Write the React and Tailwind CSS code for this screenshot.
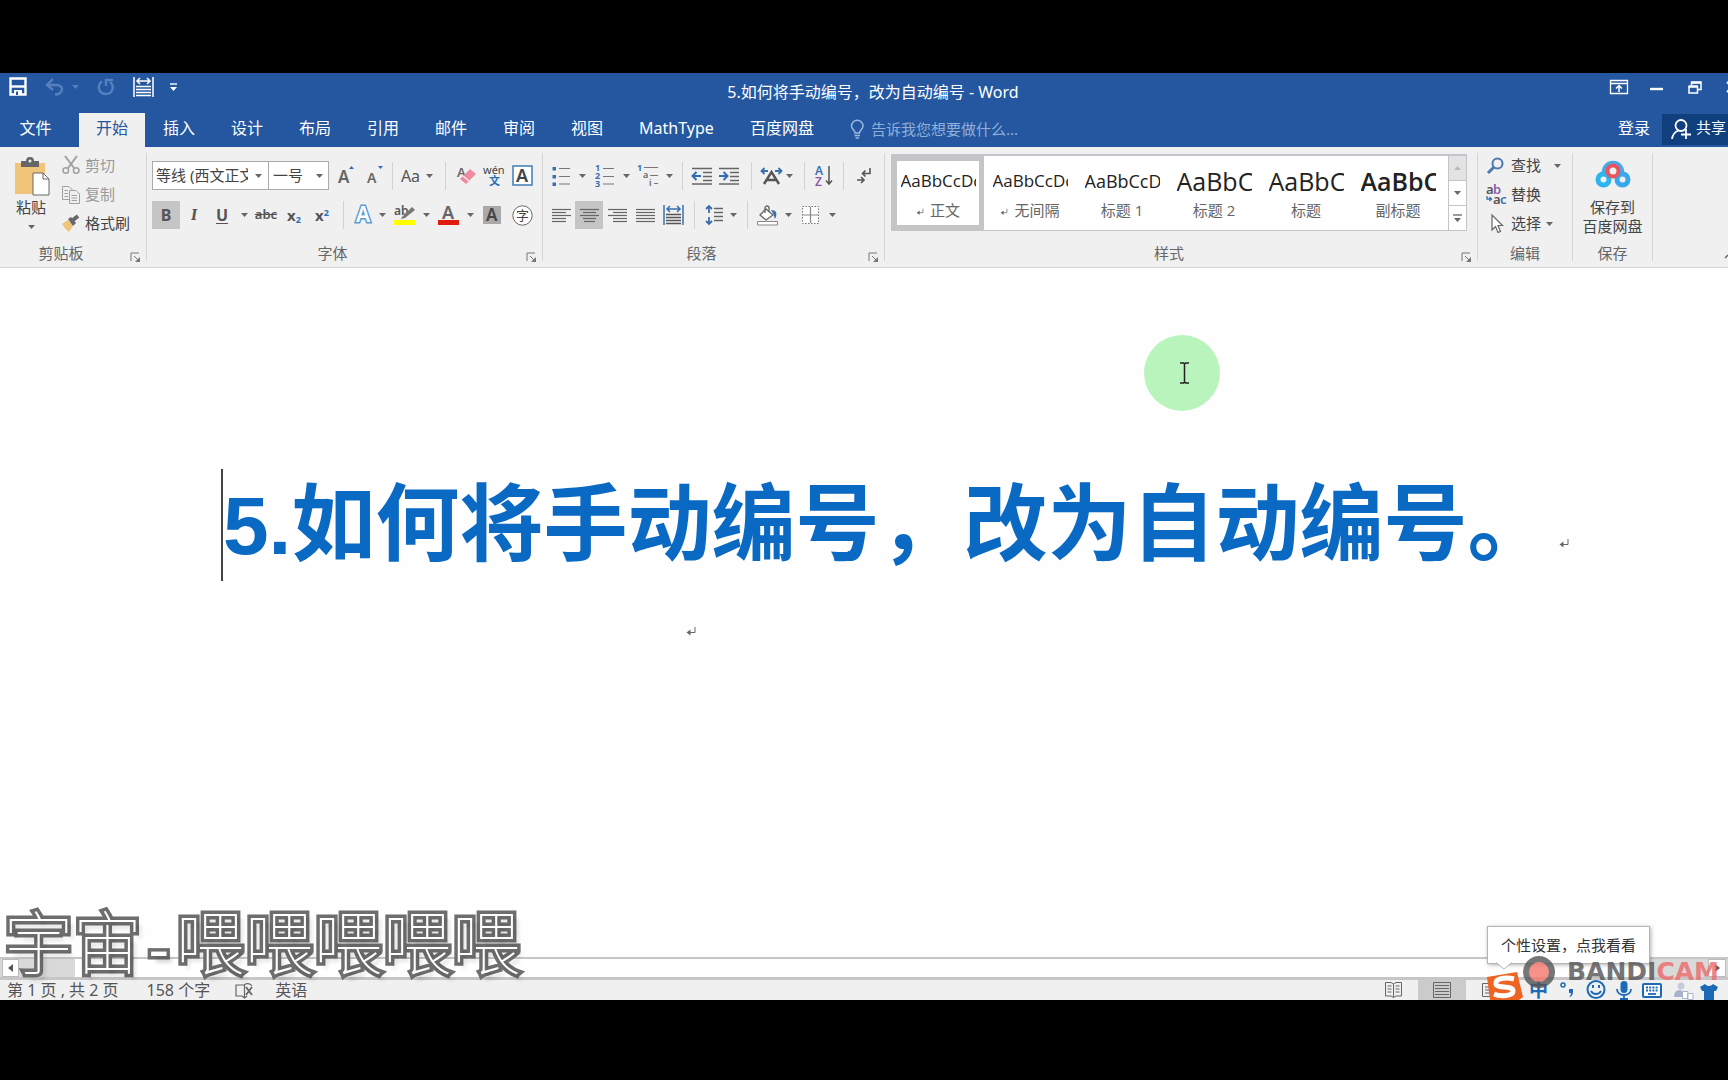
import React from 'react';
import clsx from 'clsx';

const TABS = ['插入', '设计', '布局', '引用', '邮件', '审阅', '视图', 'MathType', '百度网盘'];

const STYLES = [
    { name: '正文', sample: 'AaBbCcDd', mark: true, active: true, look: 'text-[17px]' },
    { name: '无间隔', sample: 'AaBbCcDd', mark: true, look: 'text-[17px]' },
    { name: '标题 1', sample: 'AaBbCcDd', look: 'text-[18px]' },
    { name: '标题 2', sample: 'AaBbCc', look: 'text-[25px]' },
    { name: '标题', sample: 'AaBbCc', look: 'text-[25px]' },
    { name: '副标题', sample: 'AaBbCc', look: 'text-[25px] font-semibold' },
];

const Icon = ({ w = 20, h = 20, className, children }) => (
    <svg width={w} height={h} viewBox={`0 0 ${w} ${h}`} fill="none" className={clsx('shrink-0 overflow-visible', className)} aria-hidden="true">
        {children}
    </svg>
);

const Caret = ({ className = 'text-[#666]' }) => (
    <Icon w={7} h={4} className={className}>
        <path d="M0 0H7L3.5 4Z" fill="currentColor" />
    </Icon>
);

const Tool = ({ label, className = 'w-7', active, children }) => (
    <button
        type="button"
        aria-label={label}
        className={clsx('flex h-7 shrink-0 items-center justify-center', active ? 'bg-[#c5c5c5]' : 'hover:bg-[#d5d5d5]', className)}
    >
        {children}
    </button>
);

const Drop = ({ label, className = 'w-3' }) => (
    <Tool label={label} className={className}>
        <Caret />
    </Tool>
);

const Sep = ({ className }) => (
    <div className={clsx('flex shrink-0 justify-center', className)}>
        <div className="h-7 w-px bg-[#d2d2d2]" />
    </div>
);

const Launcher = () => (
    <button type="button" aria-label="更多选项" className="absolute right-[5px] bottom-0">
        <Icon w={11} h={11}>
            <path d="M1 9V1H9" stroke="#777" />
            <path d="M4 4L8 8" stroke="#777" />
            <path d="M10 5V10H5Z" fill="#777" />
        </Icon>
    </button>
);

const Group = ({ title, launcher, className, children }) => (
    <section className={clsx('flex shrink-0 flex-col', className)} aria-label={title}>
        <div className="flex-1">{children}</div>
        <div className={clsx('relative mb-1 h-5 text-center leading-5 text-[#666]', launcher && 'pr-6')}>
            {title}
            {launcher && <Launcher />}
        </div>
    </section>
);

const Divider = () => <div className="my-[6px] w-px shrink-0 bg-[#d5d5d5]" />;

const Lines = ({ rows }) => (
    <Icon w={19} h={15}>
        {rows.map(([x1, x2], i) => (
            <path key={i} d={`M${x1} ${1.5 + i * 3}H${x2}`} stroke="#666" strokeWidth="1.2" />
        ))}
    </Icon>
);

const DistributeIcon = ({ color, arrow }) => (
    <Icon w={21} h={20}>
        <path d="M1 0V20M20 0V20" stroke={arrow} strokeWidth="1.5" />
        <path d="M4 4H17M7 1L4 4L7 7M14 1L17 4L14 7" stroke={arrow} strokeWidth="1.5" />
        <path d="M3 9.5H18M3 12.5H18M3 15.5H18M3 18.5H18" stroke={color} strokeWidth="1.5" />
    </Icon>
);

const IndentIcon = ({ right }) => (
    <Icon w={22} h={18}>
        <path d="M1 1.5H21M12 5.5H21M12 9.5H21M12 13.5H21M1 17H21" stroke="#666" strokeWidth="1.3" />
        {right ? (
            <path d="M1 9H9M5.5 5L9.5 9L5.5 13" stroke="#2e6db5" strokeWidth="2" />
        ) : (
            <path d="M2 9H10M5.5 5L1.5 9L5.5 13" stroke="#2e6db5" strokeWidth="2" />
        )}
    </Icon>
);

const ReturnMark = ({ className }) => (
    <Icon w={10} h={11} className={className}>
        <path d="M9 1V6.5H2" stroke="currentColor" />
        <path d="M0.5 6.5L4.500 3.500V9.5Z" fill="currentColor" />
    </Icon>
);

const TitleBar = () => (
    <header className="shrink-0 bg-[#2457a0] text-white">
        <div className="relative flex h-10 justify-between">
            <div className="flex h-[27px] items-center pl-[9px]">
                <button type="button" aria-label="保存">
                    <Icon w={18} h={19}>
                        <path d="M1.5 1.5H16.5V17.5H1.5Z" stroke="white" strokeWidth="2.4" />
                        <path d="M2 9.5H16" stroke="white" strokeWidth="2.4" />
                        <path d="M5 17V13H13V17Z" fill="white" />
                        <path d="M7 14.5H9V18H7Z" fill="#2457a0" />
                    </Icon>
                </button>
                <button type="button" aria-label="撤消" className="ml-[18px] flex items-center gap-2 text-[#5580bd]">
                    <Icon w={19} h={18}>
                        <path d="M8 1L2 7L8 12M2.5 7H11C16 7 18 10 16.500 13C15.500 15.500 13 16.500 10 16.500" stroke="currentColor" strokeWidth="2.4" />
                    </Icon>
                    <Caret className="text-[#5580bd]" />
                </button>
                <button type="button" aria-label="重复" className="ml-[18px] text-[#5580bd]">
                    <Icon w={18} h={18}>
                        <path d="M5 3.500C0 7 1 15.500 8.500 16C16 16 18 8 13 4" stroke="currentColor" strokeWidth="2.4" />
                        <path d="M9 8V2H16" stroke="currentColor" strokeWidth="2.4" />
                    </Icon>
                </button>
                <button type="button" aria-label="分散对齐" className="ml-[18px]">
                    <DistributeIcon color="white" arrow="white" />
                </button>
                <button type="button" aria-label="自定义快速访问工具栏" className="ml-4">
                    <Icon w={7} h={8}>
                        <path d="M0 1H7" stroke="white" strokeWidth="1.4" />
                        <path d="M0 4H7L3.5 8Z" fill="white" />
                    </Icon>
                </button>
            </div>
            <h1 className="pointer-events-none absolute inset-x-0 top-[7px] ml-[18px] text-center text-[16px] leading-6">
                5.如何将手动编号，改为自动编号 - Word
            </h1>
            <div className="relative -mr-[10px] flex h-7 items-center">
                <button type="button" aria-label="功能区显示选项">
                    <Icon w={18} h={14}>
                        <path d="M0.500 0.500H17.500V13.500H0.500ZM0.500 3.500H17.500" stroke="white" strokeWidth="1.3" />
                        <path d="M9 12V6M6 8.500L9 5.500L12 8.500" stroke="white" strokeWidth="1.5" />
                    </Icon>
                </button>
                <button type="button" aria-label="最小化" className="ml-[22px]">
                    <Icon w={13} h={14}>
                        <path d="M0 9H13" stroke="white" strokeWidth="2.4" />
                    </Icon>
                </button>
                <button type="button" aria-label="还原" className="ml-[25px]">
                    <Icon w={14} h={13}>
                        <path d="M3.500 4V1.500H13V8.500H10" stroke="white" strokeWidth="1.5" />
                        <path d="M3 1.500H13.500M0.500 5.500H10" stroke="white" strokeWidth="2.4" />
                        <path d="M1 5V12H9.500V5" stroke="white" strokeWidth="1.5" />
                    </Icon>
                </button>
                <button type="button" aria-label="关闭" className="ml-6">
                    <Icon w={12} h={12}>
                        <path d="M1 1L11 11M11 1L1 11" stroke="white" strokeWidth="2" />
                    </Icon>
                </button>
            </div>
        </div>

        <nav className="flex h-[34px] items-stretch text-[16px]">
            <button type="button" className="w-[71px] shrink-0 pb-1">文件</button>
            <button type="button" className="ml-2 w-[66px] shrink-0 bg-[#f0f0f0] pb-1 text-[#2457a0]">开始</button>
            {TABS.map((tab) => (
                <button key={tab} type="button" className="shrink-0 px-[18px] pb-1">
                    {tab}
                </button>
            ))}
            <label className="ml-[18px] flex flex-1 items-center gap-[6px] pb-[2px] text-[#9db9df]">
                <Icon w={15} h={19}>
                    <path d="M5 13C5 10 1.500 9.500 1.500 6A5.700 5.700 0 0 1 13 6C13 9.500 9.500 10 9.500 13Z" stroke="currentColor" strokeWidth="1.5" />
                    <path d="M4.500 15.500H10M5.500 18H9" stroke="currentColor" strokeWidth="1.5" />
                </Icon>
                <input
                    type="text"
                    aria-label="告诉我您想要做什么"
                    placeholder="告诉我您想要做什么..."
                    className="w-full bg-transparent text-[15px] outline-none placeholder:text-[#8fafd9]"
                />
            </label>
            <button type="button" className="w-14 shrink-0 pb-1">登录</button>
            <button type="button" className="mt-px mb-[2px] flex w-[66px] shrink-0 items-center gap-[5px] overflow-hidden bg-[#103f7e] pl-[9px] text-left whitespace-nowrap">
                <Icon w={20} h={21}>
                    <circle cx="10" cy="6.500" r="5.500" stroke="white" strokeWidth="1.8" />
                    <path d="M1 20C1.500 15 4 13 7.500 11.500M15 10V20M10 15.500H20" stroke="white" strokeWidth="1.800" />
                </Icon>
                <span className="pb-[5px] text-[15px]">共享</span>
            </button>
        </nav>
    </header>
);

const ClipboardGroup = () => (
    <Group title="剪贴板" launcher className="w-[146px]">
        <div className="flex pt-1">
            <button type="button" className="ml-[10px] flex w-[42px] flex-col items-center pt-[6px] text-[#444]">
                <Icon w={38} h={40}>
                    <path d="M3 6H33V37H3Z" fill="#f0c479" />
                    <path d="M9 4H14A4 4 0 0 1 22 4H27V10H9Z" fill="#666" />
                    <circle cx="18" cy="4" r="1.500" fill="#eee" />
                    <path d="M21 16H31L37 22V38H21Z" fill="white" stroke="#666" />
                    <path d="M31 16V22H37" stroke="#666" />
                </Icon>
                <span className="leading-5">粘贴</span>
                <span className="mt-2">
                    <Caret />
                </span>
            </button>
            <div className="ml-[10px] flex flex-col text-[#444]">
                <button type="button" className="flex h-[29px] items-center gap-[5px] text-[#9a9a9a]">
                    <Icon w={18} h={19}>
                        <path d="M3 0L12 12M15 0L6 12" stroke="#a0a0a0" strokeWidth="2" />
                        <circle cx="3.800" cy="14.500" r="2.800" stroke="#a0a0a0" strokeWidth="1.500" />
                        <circle cx="14.200" cy="14.500" r="2.800" stroke="#a0a0a0" strokeWidth="1.500" />
                    </Icon>
                    剪切
                </button>
                <button type="button" className="flex h-[29px] items-center gap-[5px] text-[#9a9a9a]">
                    <Icon w={18} h={18}>
                        <path d="M0.500 0.500H7L10 3.500V13.500H0.500Z" stroke="#a0a0a0" />
                        <path d="M7.500 4.500H14L17.500 8V17.500H7.500Z" fill="#f0f0f0" stroke="#a0a0a0" />
                        <path d="M2.500 4.500H6M2.500 7.500H6M2.500 10.500H6M9.500 9.500H15M9.500 12H15M9.500 14.500H15" stroke="#a0a0a0" />
                    </Icon>
                    复制
                </button>
                <button type="button" className="flex h-[29px] items-center gap-[5px]">
                    <Icon w={18} h={17}>
                        <path d="M0 9L6 5L11 11L7 17C4 15 2 12 0 9Z" fill="#f0c479" />
                        <path d="M6 4L9 2L14 8L11 11Z" fill="#666" />
                        <path d="M11 5L16 1" stroke="#666" strokeWidth="4" />
                    </Icon>
                    格式刷
                </button>
            </div>
        </div>
    </Group>
);

const FontGroup = () => (
    <Group title="字体" launcher className="w-[395px]">
        <div className="px-[5px] pt-[14px] text-[#555]">
            <div className="flex h-[29px] items-center">
                <div className="relative">
                    <select aria-label="字体" className="h-[29px] w-[117px] appearance-none border border-[#ababab] bg-white pr-5 pl-[3px] text-[#444] outline-none">
                        <option>等线 (西文正文)</option>
                    </select>
                    <span className="pointer-events-none absolute top-[13px] right-[7px]">
                        <Caret />
                    </span>
                </div>
                <div className="relative">
                    <select aria-label="字号" className="h-[29px] w-[60px] appearance-none border border-l-0 border-[#ababab] bg-white pl-[4px] text-[#444] outline-none">
                        <option>一号</option>
                    </select>
                    <span className="pointer-events-none absolute top-[13px] right-[6px]">
                        <Caret />
                    </span>
                </div>
                <Tool label="增大字号" className="w-[34px]">
                    <Icon w={17} h={20}>
                        <text x="0" y="17" fontSize="17" fontWeight="600" fill="#666">A</text>
                        <path d="M11 3L13.500 0L16 3Z" fill="#2e6db5" />
                    </Icon>
                </Tool>
                <Tool label="减小字号" className="w-6">
                    <Icon w={16} h={20}>
                        <text x="0" y="17" fontSize="14" fontWeight="600" fill="#666">A</text>
                        <path d="M11 0H16L13.500 3Z" fill="#2e6db5" />
                    </Icon>
                </Tool>
                <Sep className="w-[10px]" />
                <Tool label="更改大小写" className="w-10 gap-[6px] text-[16px]">
                    Aa
                    <Caret />
                </Tool>
                <Sep className="w-[16px]" />
                <Tool label="清除所有格式" className="w-[27px]">
                    <Icon w={20} h={20}>
                        <text x="0" y="11" fontSize="13" fontWeight="600" fill="#666">A</text>
                        <path d="M3 13L13 3L19 8L9 18Z" fill="#ee8b9d" />
                        <path d="M6 10L12 15" stroke="#f0f0f0" strokeWidth="1.300" />
                    </Icon>
                </Tool>
                <Tool label="拼音指南">
                    <Icon w={22} h={22}>
                        <text x="0" y="9" fontSize="11" fill="#444">wén</text>
                        <text x="6" y="20" fontSize="11" fontWeight="700" fill="#2e6db5">文</text>
                    </Icon>
                </Tool>
                <Tool label="字符边框">
                    <Icon w={21} h={21}>
                        <path d="M1 1H20V20H1Z" fill="white" stroke="#3f7cb9" strokeWidth="1.500" />
                        <text x="4" y="17" fontSize="18" fontWeight="600" fill="#444">A</text>
                    </Icon>
                </Tool>
            </div>
            <div className="mt-[11px] flex h-7 items-center">
                <Tool label="加粗" active className="w-7 text-[16px] font-bold">B</Tool>
                <Tool label="倾斜" className="w-7 font-serif text-[17px] font-bold italic">I</Tool>
                <Tool label="下划线" className="w-7 text-[16px] font-bold underline underline-offset-2">U</Tool>
                <Drop label="下划线样式" className="w-4" />
                <Tool label="删除线" className="w-7 text-[13px] font-semibold line-through">abc</Tool>
                <Tool label="下标" className="w-7 text-[15px] font-bold">
                    <span>
                        x<sub className="text-[9px] text-[#2e6db5]">2</sub>
                    </span>
                </Tool>
                <Tool label="上标" className="w-7 text-[15px] font-bold">
                    <span>
                        x<sup className="text-[9px] text-[#2e6db5]">2</sup>
                    </span>
                </Tool>
                <Sep className="w-[14px]" />
                <Tool label="文本效果和版式" className="w-[26px]">
                    <Icon w={16} h={20}>
                        <text x="1" y="17" fontSize="21" fontWeight="600" fill="white" stroke="#5b9bd5" strokeWidth="3" paintOrder="stroke">A</text>
                    </Icon>
                </Tool>
                <Drop label="文本效果选项" />
                <Tool label="以不同颜色突出显示文本" className="w-8">
                    <Icon w={21} h={21}>
                        <text x="0" y="10" fontSize="12" fontWeight="600" fill="#555">ab</text>
                        <path d="M8 12L18 2L21 5L11 13L7 14Z" fill="#777" />
                        <path d="M0 15H21V20H0Z" fill="#ffff00" />
                    </Icon>
                </Tool>
                <Drop label="突出显示颜色" />
                <Tool label="字体颜色" className="w-8">
                    <Icon w={21} h={21}>
                        <text x="4" y="14" fontSize="18" fontWeight="600" fill="#666">A</text>
                        <path d="M0 15H21V20H0Z" fill="#e21a0e" />
                    </Icon>
                </Tool>
                <Drop label="选择字体颜色" />
                <Tool label="字符底纹" className="w-8">
                    <Icon w={18} h={18}>
                        <path d="M0 0H18V18H0Z" fill="#a9a9a9" />
                        <text x="3" y="15" fontSize="17" fontWeight="600" fill="#444">A</text>
                    </Icon>
                </Tool>
                <Tool label="带圈字符">
                    <Icon w={21} h={21}>
                        <circle cx="10.500" cy="10.500" r="9.700" fill="white" stroke="#666" />
                        <text x="4" y="15" fontSize="13" fill="#444">字</text>
                    </Icon>
                </Tool>
            </div>
        </div>
    </Group>
);

const ParagraphGroup = () => (
    <Group title="段落" launcher className="w-[341px]">
        <div className="px-[4px] pt-[14px] text-[#555]">
            <div className="flex h-[29px] items-center">
                <Tool label="项目符号">
                    <Icon w={18} h={20}>
                        <path d="M7 2.500H18M7 10.500H18M7 18H18" stroke="#777" strokeWidth="1.200" />
                        <path d="M0.500 1H4V4.500H0.500ZM0.500 9H4V12.500H0.500ZM0.500 16.500H4V20H0.500Z" fill="#3a6fae" />
                    </Icon>
                </Tool>
                <Drop label="项目符号库" className="w-[14px]" />
                <Tool label="编号" className="w-[30px]">
                    <Icon w={19} h={22}>
                        <path d="M8 3.500H19M8 11.500H19M8 19H19" stroke="#777" strokeWidth="1.200" />
                        <g fill="#3a6fae" fontSize="9" fontWeight="700">
                            <text x="0" y="6">1</text>
                            <text x="0" y="14">2</text>
                            <text x="0" y="22">3</text>
                        </g>
                    </Icon>
                </Tool>
                <Drop label="编号库" className="w-[14px]" />
                <Tool label="多级列表" className="w-[30px]">
                    <Icon w={22} h={22}>
                        <path d="M7 2.500H21M13 10.500H21M17 18.500H21" stroke="#777" strokeWidth="1.200" />
                        <text x="0" y="6" fontSize="9" fontWeight="700" fill="#3a6fae">1</text>
                        <text x="6" y="13" fontSize="9" fontWeight="600" fill="#666">a</text>
                        <text x="12" y="21" fontSize="9" fontWeight="600" fill="#666">i</text>
                    </Icon>
                </Tool>
                <Drop label="列表库" />
                <Sep className="w-[14px]" />
                <Tool label="减少缩进量" className="w-[26px]">
                    <IndentIcon />
                </Tool>
                <Tool label="增加缩进量">
                    <IndentIcon right />
                </Tool>
                <Sep className="w-4" />
                <Tool label="中文版式" className="w-6">
                    <Icon w={21} h={19}>
                        <path d="M0 5H7M3.500 2L0.500 5L3.500 8M21 5H14M17.500 2L20.500 5L17.500 8" stroke="#3a6fae" strokeWidth="1.800" />
                        <path d="M3 18L10.500 6L18 18M6 14H15" stroke="#555" strokeWidth="2.400" />
                    </Icon>
                </Tool>
                <Drop label="中文版式选项" />
                <Sep className="w-[18px]" />
                <Tool label="排序" className="w-[22px]">
                    <Icon w={18} h={22}>
                        <text x="0" y="10" fontSize="12" fontWeight="600" fill="#3a6fae">A</text>
                        <text x="0" y="21" fontSize="12" fontWeight="600" fill="#8a5ba6">Z</text>
                        <path d="M14 1V19M11 15.500L14 19L17 15.500" stroke="#555" strokeWidth="1.500" />
                    </Icon>
                </Tool>
                <Sep className="w-4" />
                <Tool label="显示编辑标记" className="w-[26px]">
                    <Icon w={14} h={18}>
                        <path d="M13 1V6.500H6M8.500 3.500L5.500 6.500L8.500 9.500M0 13H6M4 10L7 13L4 16" stroke="#555" strokeWidth="1.600" />
                    </Icon>
                </Tool>
            </div>
            <div className="mt-[11px] flex h-7 items-center">
                <Tool label="左对齐">
                    <Lines rows={[[0, 19], [0, 14], [0, 19], [0, 14], [0, 14]]} />
                </Tool>
                <Tool label="居中" active>
                    <Lines rows={[[0, 19], [3, 16], [0, 19], [3, 16], [4, 15]]} />
                </Tool>
                <Tool label="右对齐">
                    <Lines rows={[[0, 19], [5, 19], [0, 19], [5, 19], [5, 19]]} />
                </Tool>
                <Tool label="两端对齐">
                    <Lines rows={[[0, 19], [0, 19], [0, 19], [0, 19], [0, 19]]} />
                </Tool>
                <Tool label="分散对齐">
                    <DistributeIcon color="#555" arrow="#3a6fae" />
                </Tool>
                <Sep className="w-[14px]" />
                <Tool label="行和段落间距" className="w-[26px]">
                    <Icon w={18} h={20}>
                        <path d="M4 1V8M1 4L4 1L7 4M4 12V19M1 16L4 19L7 16" stroke="#3a6fae" strokeWidth="1.800" />
                        <path d="M9 3.500H18M9 7.500H18M9 11.500H18M9 15.500H18" stroke="#666" strokeWidth="1.300" />
                    </Icon>
                </Tool>
                <Drop label="间距选项" />
                <Sep className="w-4" />
                <Tool label="底纹" className="w-[26px]">
                    <Icon w={22} h={21}>
                        <path d="M9 4L16 10L9 15L3 10Z" fill="white" stroke="#666" strokeWidth="1.300" />
                        <path d="M8 8V3A2 2 0 0 1 12 3V7" stroke="#666" strokeWidth="1.300" />
                        <path d="M14 5C19 5 21 8 18 14C17 11 17 9 14 5Z" fill="#3a6fae" />
                        <path d="M0.500 16.500H20.500V20H0.500Z" fill="white" stroke="#888" />
                    </Icon>
                </Tool>
                <Drop label="底纹颜色" className="w-[14px]" />
                <Tool label="边框" className="w-[30px]">
                    <Icon w={17} h={18}>
                        <path d="M0.500 0.500H16.500V17.500H0.500Z" fill="white" stroke="#777" strokeDasharray="1.500 1.500" />
                        <path d="M8.500 1V17M1 9H16" stroke="#888" strokeWidth="1.200" />
                    </Icon>
                </Tool>
                <Drop label="边框选项" className="w-[14px]" />
            </div>
        </div>
    </Group>
);

const StylesGroup = () => (
    <Group title="样式" launcher className="w-[592px]">
        <div className="mt-[7px] ml-[6px] flex h-[77px] w-[576px] border border-t-2 border-[#c1c4c8] bg-white">
            {STYLES.map(({ name, sample, mark, active, look }) => (
                <button
                    key={name}
                    type="button"
                    className={clsx(
                        'flex w-[92px] shrink-0 flex-col items-center border-[5px] pt-[4px] font-["Open_Sans","Noto_Sans_CJK_SC",sans-serif]',
                        active ? 'border-[#c5c5c5]' : 'border-transparent'
                    )}
                >
                    <span className={clsx('h-8 w-[75px] overflow-hidden text-left leading-8 whitespace-nowrap text-[#222]', look)}>{sample}</span>
                    <span className="flex items-center gap-[6px] leading-[26px] whitespace-nowrap text-[#666]">
                        {mark && <ReturnMark className="mt-1 size-2" />}
                        {name}
                    </span>
                </button>
            ))}
            <div className="ml-auto flex w-[18px] shrink-0 flex-col divide-y divide-[#c5c5c5] border-l border-[#c5c5c5]">
                <button type="button" aria-label="上一行" className="flex flex-1 items-center justify-center bg-[#e3e3e3]">
                    <Caret className="rotate-180 text-[#bbb]" />
                </button>
                <button type="button" aria-label="下一行" className="flex flex-1 items-center justify-center">
                    <Caret />
                </button>
                <button type="button" aria-label="其他样式" className="flex flex-1 items-center justify-center">
                    <Icon w={9} h={8}>
                        <path d="M0 1H9" stroke="#666" strokeWidth="1.300" />
                        <path d="M1 4H8L4.500 8Z" fill="#666" />
                    </Icon>
                </button>
            </div>
        </div>
    </Group>
);

const EditGroup = () => (
    <Group title="编辑" className="w-[94px]">
        <div className="flex flex-col pt-1 pl-2 text-[#444]">
            <button type="button" className="flex h-[29px] items-center">
                <Icon w={20} h={18} className="mr-[5px]">
                    <circle cx="11.500" cy="6.500" r="5" stroke="#4b78ae" strokeWidth="2" />
                    <path d="M8 10L2 16" stroke="#4b78ae" strokeWidth="3" />
                </Icon>
                查找
                <span className="ml-[13px]">
                    <Caret />
                </span>
            </button>
            <button type="button" className="flex h-[29px] items-center">
                <Icon w={22} h={22} className="mr-[3px]">
                    <g fontSize="13" fontWeight="600">
                        <text x="0" y="10" fill="#555">a</text>
                        <text x="7" y="10" fill="#8a5ba6">b</text>
                        <text x="7" y="20" fill="#555">a</text>
                        <text x="14" y="20" fill="#3a6fae">c</text>
                    </g>
                    <path d="M1 12V15H5M3.500 13L5.500 15L3.500 17" stroke="#3a6fae" strokeWidth="1.300" />
                </Icon>
                替换
            </button>
            <button type="button" className="flex h-[29px] items-center">
                <Icon w={20} h={20} className="mr-[5px]">
                    <path d="M6 1V16L9.500 12.500L12 18.500L14.500 17.500L12 11.500H16.500Z" fill="white" stroke="#666" strokeWidth="1.200" />
                </Icon>
                选择
                <span className="ml-[5px]">
                    <Caret />
                </span>
            </button>
        </div>
    </Group>
);

const SaveGroup = () => (
    <Group title="保存" className="w-[79px]">
        <button type="button" className="flex w-full flex-col items-center pt-[13px] leading-[19px] whitespace-nowrap text-[#444]">
            <Icon w={36} h={29} className="mb-[9px]">
                <path d="M9 12A9 9 0 0 1 27 12" stroke="#4aa8e8" strokeWidth="4.500" />
                <circle cx="8.500" cy="19.500" r="5.500" stroke="#2db5ee" strokeWidth="5" />
                <circle cx="27.500" cy="19.500" r="5.500" stroke="#38a7ef" strokeWidth="5" />
                <circle cx="18" cy="11" r="5.500" fill="#f0f0f0" stroke="#e9545f" strokeWidth="4" />
            </Icon>
            <span>保存到</span>
            <span>百度网盘</span>
        </button>
    </Group>
);

const Ribbon = () => (
    <div className="flex h-[121px] shrink-0 overflow-hidden border-b border-[#d5d5d5] bg-[#f0f0f0] text-[15px]">
        <ClipboardGroup />
        <Divider />
        <FontGroup />
        <Divider />
        <ParagraphGroup />
        <Divider />
        <StylesGroup />
        <Divider />
        <EditGroup />
        <Divider />
        <SaveGroup />
        <Divider />
        <button type="button" aria-label="折叠功能区" className="mb-2 ml-auto flex items-end">
            <Icon w={3} h={5}>
                <path d="M0 4L3 1" stroke="#666" strokeWidth="1.500" />
            </Icon>
        </button>
    </div>
);

const Document = () => (
    <main className="relative flex-1 overflow-hidden bg-[#fefefe]">
        <div className="flex flex-col px-[221px] pt-[201px]">
            <div className="flex h-28 items-center border-l-2 border-[#444] whitespace-nowrap">
                <h2 className='font-["Liberation_Sans","Noto_Sans_CJK_SC",sans-serif] text-[84px] leading-[114px] font-bold text-[#0a69c2]'>
                    <span className="text-[82px]">5.</span>如何将手动编号，改为自动编号。
                </h2>
                <ReturnMark className="mt-9 ml-2 text-[#666]" />
            </div>
            <ReturnMark className="mt-[45px] ml-[465px] text-[#666]" />
        </div>
        {/* click highlight with the text cursor inside */}
        <div className="absolute top-[67px] left-[1144px] flex size-[76px] items-center justify-center rounded-full bg-[#b9f4bd] pl-1">
            <Icon w={9} h={22}>
                <path d="M0 1H3.500L4.500 2L5.500 1H9M4.500 2V20M0 21H3.500L4.500 20L5.500 21H9" stroke="#222" strokeWidth="1.500" />
            </Icon>
        </div>
    </main>
);

const InputMethodBar = () => (
    <div className="absolute right-0 bottom-0 flex h-7 w-[242px] items-end overflow-hidden text-[#1d69b8]">
        <Icon w={37} h={28}>
            <path d="M1 5L31 0L37 25L33 28H4Z" fill="#ee6424" />
            <path d="M28 7C20 5 9 6 10 12C11 17 27 13 27 19C27 24 15 25 8 22" stroke="white" strokeWidth="5" />
        </Icon>
        <span className="ml-[6px] text-[19px] leading-5 font-bold">中</span>
        <Icon w={14} h={16} className="mb-[2px] ml-3">
            <circle cx="3" cy="3" r="2" stroke="currentColor" strokeWidth="1.500" />
            <path d="M9 7H13V10C13 13 11 15 9 15.500C10 14 11 13 11 11H9Z" fill="currentColor" />
        </Icon>
        <Icon w={20} h={20} className="ml-3">
            <circle cx="10" cy="9.500" r="8.500" stroke="currentColor" strokeWidth="2" />
            <path d="M7 5V8M13 5V8" stroke="currentColor" strokeWidth="2" />
            <path d="M5 11C7 15 13 15 15 11" stroke="currentColor" strokeWidth="1.800" />
        </Icon>
        <Icon w={16} h={19} className="ml-[10px]">
            <rect x="4.500" y="0" width="7" height="12" rx="3.500" fill="currentColor" />
            <path d="M1 8C1 16 15 16 15 8M8 14V18M4 18H12" stroke="currentColor" strokeWidth="1.800" />
        </Icon>
        <Icon w={20} h={15} className="mb-[2px] ml-[10px]">
            <rect x="1" y="1" width="18" height="13" rx="1" fill="white" stroke="currentColor" strokeWidth="2" />
            <path d="M4 4.500H16M4 7.500H16" stroke="currentColor" strokeWidth="1.800" strokeDasharray="2 1.200" />
            <path d="M6 11H14" stroke="currentColor" strokeWidth="1.800" />
        </Icon>
        <Icon w={20} h={18} className="ml-3">
            <circle cx="7" cy="4" r="3.500" fill="#c9ccd6" />
            <path d="M0 15C0 9 3 8 7 8L11 15Z" fill="#a9b3cc" />
            <path d="M8.500 9.500H14V16.500H8.500ZM13.500 11.500H19V17.500H13.500Z" fill="white" stroke="#a9b3cc" />
        </Icon>
        <Icon w={18} h={17} className="ml-[6px]">
            <path d="M0 4L5 1C7 3.500 11 3.500 13 1L18 4L16 8H14V17H4V8H2Z" fill="currentColor" />
        </Icon>
    </div>
);

const StatusBar = () => (
    <footer className="relative shrink-0 text-[16px] text-[#555]">
        <div className="flex h-5 items-stretch border-t-2 border-[#c6c6c6] bg-[#d9d9d9]">
            <button type="button" aria-label="向左滚动" className="ml-[2px] flex w-[17px] items-center justify-center border border-[#bbb] bg-white">
                <Icon w={5} h={8}>
                    <path d="M5 0V8L0 4Z" fill="#555" />
                </Icon>
            </button>
            <div className="mr-[58px] ml-[56px] flex-1 bg-white" />
            <button type="button" aria-label="向右滚动" className="mr-[2px] flex w-[18px] items-center justify-center border border-[#bbb] bg-white">
                <Icon w={5} h={8}>
                    <path d="M0 0V8L5 4Z" fill="#555" />
                </Icon>
            </button>
        </div>
        <div className="flex h-[23px] items-center overflow-hidden border-t-[3px] border-[#c6c6c6] bg-[#f0f0f0] pl-[7px] whitespace-nowrap">
            <span>第 1 页 , 共 2 页</span>
            <span className="ml-7">158 个字</span>
            <Icon w={19} h={16} className="ml-[25px]">
                <path d="M9 3H1V14H7L9.500 16L12 14M9.500 3V16M9 3C11 1 15 1 17 4" stroke="#666" strokeWidth="1.200" />
                <path d="M11 5L17 13M17 5L11 13" stroke="#666" strokeWidth="1.800" />
            </Icon>
            <span className="ml-[21px]">英语</span>
            <div className="mr-[230px] ml-auto flex self-stretch">
                <button type="button" aria-label="阅读视图" className="flex w-[50px] items-center justify-center">
                    <Icon w={17} h={16}>
                        <path d="M8.500 2L6 0.500H0.500V14H6L8.500 15.500L11 14H16.500V0.500H11ZM8.500 2V15.500" stroke="#666" />
                        <path d="M2.500 4H6.500M2.500 7H6.500M2.500 10H6.500M10.500 4H14.500M10.500 7H14.500M10.500 10H14.500" stroke="#666" />
                    </Icon>
                </button>
                <button type="button" aria-label="页面视图" className="flex w-12 items-center justify-center bg-[#cbcbcb]">
                    <Icon w={18} h={16}>
                        <path d="M0.500 0.500H17.500V15.500H0.500Z" stroke="#666" />
                        <path d="M2 3.500H16M2 6.500H16M2 9.500H16M2 12.500H16" stroke="#666" />
                    </Icon>
                </button>
                <button type="button" aria-label="Web 版式视图" className="flex w-8 items-center justify-end">
                    <Icon w={16} h={14}>
                        <path d="M0.500 0.500H15.500V13.500H0.500ZM3 4H12M3 7H12M3 10H12" stroke="#666" />
                    </Icon>
                </button>
            </div>
        </div>

        <div className="absolute right-[78px] bottom-9 border border-[#b5b5b5] bg-white px-[13px] text-[15px] leading-9 whitespace-nowrap text-[#333] shadow-[1px_1px_4px_rgba(0,0,0,0.3)]">
            个性设置，点我看看
            <Icon w={16} h={8} className="absolute -bottom-[7px] left-2">
                <path d="M0 0H16L8 7Z" fill="white" />
                <path d="M0 0.500L8 7L16 0.500" stroke="#b5b5b5" />
            </Icon>
        </div>
        <InputMethodBar />

        {/* recorder watermark */}
        <div className="absolute right-[9px] bottom-3 flex items-center gap-3 opacity-80">
            <Icon w={32} h={32}>
                <circle cx="16" cy="16" r="13" fill="#f4776d" stroke="#555" strokeWidth="6" />
            </Icon>
            <span className='font-["DejaVu_Sans",sans-serif] text-[25px] leading-8 font-bold text-[#555]'>
                BANDI<span className="text-[#ec6a6a]">CAM</span>
            </span>
        </div>
        <div className='absolute bottom-0 left-1 font-["Liberation_Mono","Noto_Sans_CJK_SC",monospace] text-[69px] leading-[92px] font-thin whitespace-nowrap text-white [-webkit-text-stroke:7px_#6e6e6e] [paint-order:stroke_fill] [text-shadow:5px_6px_4px_rgba(0,0,0,0.2)]'>
            宇宙<span className="text-[56px]">-</span>喂喂喂喂喂
        </div>
    </footer>
);

export default function App() {
    return (
        <div className='flex h-screen flex-col overflow-hidden bg-black pt-[73px] pb-20 font-["Noto_Sans","Noto_Sans_CJK_SC",sans-serif]'>
            <TitleBar />
            <Ribbon />
            <Document />
            <StatusBar />
        </div>
    );
}
